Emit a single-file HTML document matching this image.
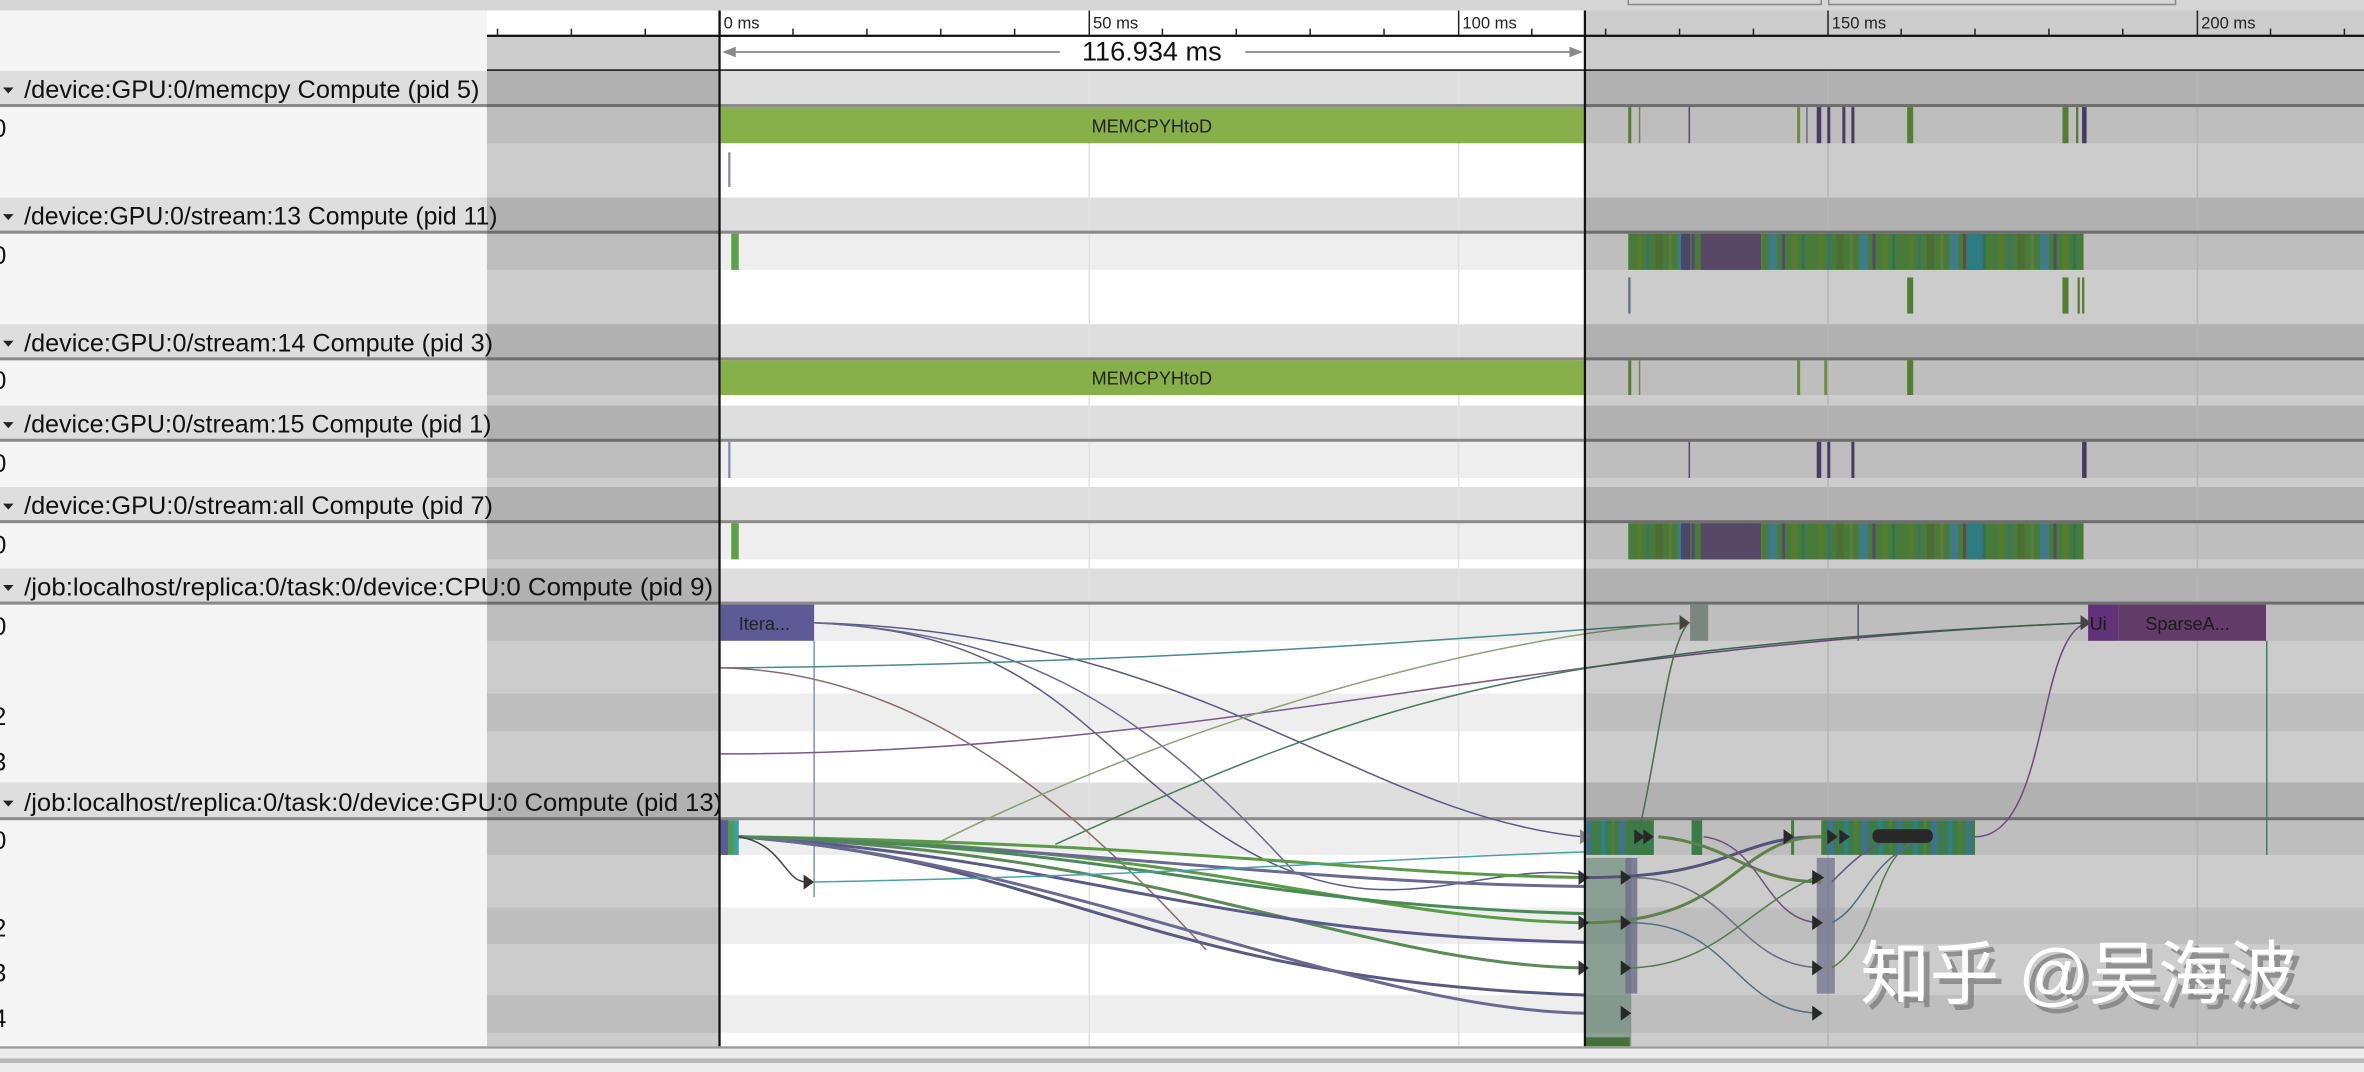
<!DOCTYPE html>
<html><head><meta charset="utf-8"><style>
html,body{margin:0;padding:0;background:#e8e8e8;overflow:hidden}
svg{display:block}
text{font-family:"Liberation Sans","Noto Sans CJK SC",sans-serif}
</style></head><body>
<svg width="2364" height="1072" viewBox="0 0 1568 711" preserveAspectRatio="none" xmlns="http://www.w3.org/2000/svg">
<defs>
<pattern id="dense" x="1080" y="0" width="60" height="10" patternUnits="userSpaceOnUse">
<rect width="60" height="10" fill="#5a9a48"/>
<rect x="6" width="3" height="10" fill="#6c9a3c"/>
<rect x="12" width="2" height="10" fill="#4a8f86"/>
<rect x="18" width="5" height="10" fill="#5f8a3f"/>
<rect x="27" width="2" height="10" fill="#7a9a50"/>
<rect x="33" width="6" height="10" fill="#4f9aa8"/>
<rect x="42" width="2" height="10" fill="#6d5a8a"/>
<rect x="48" width="4" height="10" fill="#6a9c40"/>
<rect x="55" width="2" height="10" fill="#3f8f6a"/>
</pattern>
<pattern id="dense2" x="0" y="0" width="23" height="10" patternUnits="userSpaceOnUse">
<rect width="23" height="10" fill="#4e9a5a"/>
<rect x="4" width="3" height="10" fill="#3aa0a8"/>
<rect x="11" width="2" height="10" fill="#6a9c40"/>
<rect x="16" width="4" height="10" fill="#4f8fb0"/>
</pattern>
</defs>
<rect x="0" y="0" width="1568" height="7" fill="#d6d6d6"/>
<rect x="1080" y="-2" width="128" height="5" fill="none" stroke="#888" stroke-width="1"/>
<rect x="1213" y="-2" width="230" height="5" fill="none" stroke="#888" stroke-width="1"/>
<rect x="0" y="7" width="323" height="687" fill="#f5f5f5"/>
<rect x="323" y="7" width="1245" height="17" fill="#fff"/>
<rect x="323" y="24" width="1245" height="22" fill="#fff"/>
<g fill="#dedede">
<rect x="0" y="47" width="1568" height="23"/>
<rect x="0" y="131" width="1568" height="23"/>
<rect x="0" y="215" width="1568" height="23"/>
<rect x="0" y="269" width="1568" height="23"/>
<rect x="0" y="323" width="1568" height="23"/>
<rect x="0" y="377" width="1568" height="23"/>
<rect x="0" y="519" width="1568" height="24"/>
</g>
<g fill="#eeeeee">
<rect x="323" y="71" width="1245" height="24"/>
<rect x="323" y="155" width="1245" height="24"/>
<rect x="323" y="239" width="1245" height="23"/>
<rect x="323" y="293" width="1245" height="24"/>
<rect x="323" y="347" width="1245" height="24"/>
<rect x="323" y="401" width="1245" height="24"/>
<rect x="323" y="460" width="1245" height="25"/>
<rect x="323" y="544" width="1245" height="23"/>
<rect x="323" y="602" width="1245" height="24"/>
<rect x="323" y="660" width="1245" height="25"/>
</g>
<g fill="#ffffff">
<rect x="323" y="95" width="1245" height="36"/>
<rect x="323" y="179" width="1245" height="36"/>
<rect x="323" y="262" width="1245" height="7"/>
<rect x="323" y="317" width="1245" height="6"/>
<rect x="323" y="371" width="1245" height="6"/>
<rect x="323" y="425" width="1245" height="35"/>
<rect x="323" y="485" width="1245" height="34"/>
<rect x="323" y="567" width="1245" height="35"/>
<rect x="323" y="626" width="1245" height="34"/>
<rect x="323" y="685" width="1245" height="9"/>
</g>
<g stroke="#e2e2e2" stroke-width="1">
<line x1="722.5" y1="46" x2="722.5" y2="694"/>
<line x1="967.5" y1="46" x2="967.5" y2="694"/>
<line x1="1212.5" y1="46" x2="1212.5" y2="694"/>
<line x1="1457.5" y1="46" x2="1457.5" y2="694"/>
</g>
<g fill="#8a8a8a">
<rect x="0" y="69" width="1568" height="2"/>
<rect x="0" y="153" width="1568" height="2"/>
<rect x="0" y="237" width="1568" height="2"/>
<rect x="0" y="291" width="1568" height="2"/>
<rect x="0" y="345" width="1568" height="2"/>
<rect x="0" y="399" width="1568" height="2"/>
<rect x="0" y="542" width="1568" height="2"/>
</g>
<rect x="478" y="71" width="573" height="24" fill="#87b04a"/>
<text x="764" y="88" font-size="12" text-anchor="middle" fill="#222">MEMCPYHtoD</text>
<rect x="483" y="101" width="1.5" height="23" fill="#8888aa"/>
<rect x="478" y="239" width="573" height="23" fill="#87b04a"/>
<text x="764" y="255" font-size="12" text-anchor="middle" fill="#222">MEMCPYHtoD</text>
<rect x="485" y="155" width="5" height="24" fill="#5ea04a"/>
<rect x="483" y="293" width="1.5" height="24" fill="#8888aa"/>
<rect x="485" y="347" width="5" height="24" fill="#5ea04a"/>
<g>
<rect x="1080" y="71" width="2" height="24" fill="#6a9c40"/><rect x="1087" y="71" width="1" height="24" fill="#8ab04a"/>
<rect x="1120" y="71" width="1" height="24" fill="#6d5a8a"/>
<rect x="1192" y="71" width="2" height="24" fill="#8ab04a"/><rect x="1198" y="71" width="1" height="24" fill="#8888aa"/>
<rect x="1205" y="71" width="3" height="24" fill="#5a4a7a"/><rect x="1212" y="71" width="2" height="24" fill="#5a4a7a"/>
<rect x="1222" y="71" width="2" height="24" fill="#5a4a7a"/><rect x="1228" y="71" width="2" height="24" fill="#5a4a7a"/>
<rect x="1265" y="71" width="4" height="24" fill="#6a9c40"/>
<rect x="1368" y="71" width="4" height="24" fill="#6a9c40"/><rect x="1377" y="71" width="1.5" height="24" fill="#6a9c40"/>
<rect x="1381" y="71" width="3" height="24" fill="#5a4a7a"/>
<rect x="1080" y="155" width="302" height="24" fill="url(#dense)"/>
<rect x="1115" y="155" width="6" height="24" fill="#5a5a8a"/>
<rect x="1128" y="155" width="40" height="24" fill="#6d5a80"/>
<rect x="1305" y="155" width="10" height="24" fill="#3a9aa6"/>
<rect x="1080" y="184" width="1.5" height="24" fill="#7a8aa0"/>
<rect x="1265" y="184" width="4" height="24" fill="#6a9c40"/>
<rect x="1368" y="184" width="4" height="24" fill="#6a9c40"/><rect x="1378" y="184" width="1.5" height="24" fill="#6a9c40"/><rect x="1381" y="184" width="1.5" height="24" fill="#6a9c40"/>
<rect x="1080" y="239" width="2" height="23" fill="#6a9c40"/><rect x="1087" y="239" width="1" height="23" fill="#8ab04a"/>
<rect x="1192" y="239" width="2" height="23" fill="#8ab04a"/><rect x="1210" y="239" width="2" height="23" fill="#8ab04a"/>
<rect x="1265" y="239" width="4" height="23" fill="#6a9c40"/>
<rect x="1120" y="293" width="1" height="24" fill="#6d5a8a"/>
<rect x="1205" y="293" width="3" height="24" fill="#5a4a7a"/><rect x="1212" y="293" width="2" height="24" fill="#5a4a7a"/><rect x="1228" y="293" width="2" height="24" fill="#5a4a7a"/>
<rect x="1381" y="293" width="3" height="24" fill="#5a4a7a"/>
<rect x="1080" y="347" width="302" height="24" fill="url(#dense)"/>
<rect x="1115" y="347" width="6" height="24" fill="#5a5a8a"/>
<rect x="1128" y="347" width="40" height="24" fill="#6d5a80"/>
<rect x="1305" y="347" width="10" height="24" fill="#3a9aa6"/>
</g>
<rect x="478" y="401" width="62" height="24" fill="#5d5a96"/>
<text x="490" y="418" font-size="12" fill="#222">Itera...</text>
<rect x="539.5" y="425" width="1" height="170" fill="#7a9aaa"/>
<rect x="1121" y="401" width="12" height="24" fill="#9aa8a0"/>
<rect x="1232" y="401" width="1" height="24" fill="#6d6d9a"/>
<rect x="1385" y="401" width="20" height="24" fill="#7a3f96"/>
<rect x="1405" y="401" width="98" height="24" fill="#7b4a82"/>
<text x="1386" y="418" font-size="12" fill="#222">Ui</text>
<text x="1423" y="418" font-size="12" fill="#222">SparseA...</text>
<rect x="1503" y="425" width="1" height="142" fill="#5a9a80"/>
<rect x="478" y="544" width="12" height="23" fill="url(#dense2)"/>
<rect x="478" y="544" width="5" height="23" fill="#5d5a96"/>
<rect x="1052" y="544" width="45" height="23" fill="url(#dense2)"/>
<rect x="1080" y="544" width="16" height="23" fill="#4a9a5a"/>
<rect x="1122" y="544" width="7" height="23" fill="#4a9a5a"/>
<rect x="1208" y="544" width="102" height="23" fill="url(#dense2)"/>
<rect x="1188" y="544" width="2" height="23" fill="#5a9a50"/>
<rect x="1052" y="569" width="30" height="125" fill="#6a9a80" opacity="0.55"/>
<rect x="1078" y="569" width="8" height="90" fill="#8888aa" opacity="0.8"/>
<rect x="1205" y="569" width="12" height="90" fill="#8888aa" opacity="0.7"/>
<rect x="1052" y="688" width="29" height="6" fill="#5a8a48"/>
<g fill="none" stroke-width="1">
<path d="M540 413 C800 420 900 540 1050 555" stroke="#5a5a80"/>
<path d="M540 413 C700 420 720 500 820 560 S980 570 1050 580" stroke="#5a5a80"/>
<path d="M540 413 C680 420 760 470 860 580" stroke="#6a6a90"/>
<path d="M478 443 C800 440 1000 420 1120 413" stroke="#4a8a8a"/>
<path d="M478 443 C600 445 700 520 800 630" stroke="#8a6a6a"/>
<path d="M478 500 C800 500 1000 430 1385 413" stroke="#7a5a8a"/>
<path d="M700 560 C900 470 1000 430 1385 413" stroke="#4a7a5a"/>
<path d="M620 560 C800 470 1000 420 1120 413" stroke="#8aa078"/>
<path d="M1310 555 C1360 555 1350 420 1385 413" stroke="#8a5a9a"/>
<path d="M1085 560 C1100 500 1105 430 1120 413" stroke="#5a8a5a"/>
<g stroke-width="2">
<path d="M490 555 C800 560 900 580 1052 582" stroke="#5a9a48"/>
<path d="M490 555 C800 560 900 610 1052 612" stroke="#5a9a48"/>
<path d="M490 555 C780 565 900 640 1052 642" stroke="#5a8a58"/>
<path d="M490 555 C760 565 850 585 1052 588" stroke="#6a6a90"/>
<path d="M490 555 C720 570 800 620 1052 625" stroke="#5a5a88"/>
<path d="M490 555 C700 570 760 650 1052 660" stroke="#5a5a80"/>
<path d="M490 555 C700 570 900 670 1052 672" stroke="#6a6a90"/>
<path d="M490 555 C740 560 820 600 1052 606" stroke="#4a8a58"/>
</g>
<path d="M490 555 C520 560 520 585 535 585" stroke="#444"/>
<path d="M540 585 C800 580 900 570 1052 565" stroke="#4aa0a8"/>
<path d="M1052 582 C1150 582 1150 555 1208 555" stroke="#6a6a9a" stroke-width="2"/>
<path d="M1052 612 C1150 612 1150 555 1208 555" stroke="#7aa060" stroke-width="2"/>
<path d="M1082 582 C1150 582 1150 640 1208 642" stroke="#8a8aa0"/>
<path d="M1082 612 C1150 612 1150 672 1208 672" stroke="#6a8aa0"/>
<path d="M1100 555 C1150 560 1160 585 1208 585" stroke="#7aa060" stroke-width="2"/>
<path d="M1130 555 C1170 560 1170 612 1208 612" stroke="#8a6a9a"/>
<path d="M1082 642 C1140 640 1160 600 1208 580" stroke="#6a9a60"/>
<path d="M1215 612 C1240 600 1240 560 1290 555" stroke="#5a8aa0"/>
<path d="M1215 642 C1250 620 1240 560 1280 555" stroke="#6a9a60"/>
<path d="M1215 585 C1230 570 1240 560 1260 555" stroke="#7a6aa0"/>
</g>
<g fill="#333">
<path d="M1048 550 l7 5 l-7 5z" fill="#888"/>
<path d="M1047 577 l7 5 l-7 5z"/><path d="M1047 607 l7 5 l-7 5z"/><path d="M1047 637 l7 5 l-7 5z"/>
<path d="M1075 577 l7 5 l-7 5z"/><path d="M1075 607 l7 5 l-7 5z"/><path d="M1075 637 l7 5 l-7 5z"/><path d="M1075 667 l7 5 l-7 5z"/>
<path d="M1202 577 l8 5 l-8 5z"/><path d="M1202 607 l7 5 l-7 5z"/><path d="M1202 637 l7 5 l-7 5z"/><path d="M1202 667 l7 5 l-7 5z"/>
<path d="M1084 550 l7 5 l-7 5z"/><path d="M1090 550 l7 5 l-7 5z"/><path d="M1183 550 l7 5 l-7 5z"/>
<path d="M1212 550 l7 5 l-7 5z"/><path d="M1220 550 l7 5 l-7 5z"/>
<rect x="1242" y="550" width="40" height="9" rx="4"/>
<path d="M533 580 l7 5 l-7 5z"/>
<path d="M1114 408 l7 5 l-7 5z" fill="#555"/>
<path d="M1380 408 l7 5 l-7 5z" fill="#555"/>
</g>
<rect x="323" y="24" width="154" height="670" fill="#000" opacity="0.2"/>
<rect x="1052" y="7" width="516" height="687" fill="#000" opacity="0.2"/>
<rect x="323" y="23" width="1245" height="1.5" fill="#111"/>
<rect x="323" y="46" width="1245" height="1" fill="#111"/>
<g stroke="#222" stroke-width="1">
<line x1="477.5" y1="7" x2="477.5" y2="24"/><line x1="722.5" y1="7" x2="722.5" y2="24"/><line x1="967.5" y1="7" x2="967.5" y2="24"/><line x1="1212.5" y1="7" x2="1212.5" y2="24"/><line x1="1457.5" y1="7" x2="1457.5" y2="24"/>
<g>
<line x1="330" y1="19" x2="330" y2="24"/><line x1="379" y1="19" x2="379" y2="24"/><line x1="428" y1="19" x2="428" y2="24"/>
<line x1="526" y1="19" x2="526" y2="24"/><line x1="575" y1="19" x2="575" y2="24"/><line x1="624" y1="19" x2="624" y2="24"/><line x1="673" y1="19" x2="673" y2="24"/>
<line x1="771" y1="19" x2="771" y2="24"/><line x1="820" y1="19" x2="820" y2="24"/><line x1="869" y1="19" x2="869" y2="24"/><line x1="918" y1="19" x2="918" y2="24"/>
<line x1="1016" y1="19" x2="1016" y2="24"/><line x1="1065" y1="19" x2="1065" y2="24"/><line x1="1114" y1="19" x2="1114" y2="24"/><line x1="1163" y1="19" x2="1163" y2="24"/>
<line x1="1261" y1="19" x2="1261" y2="24"/><line x1="1310" y1="19" x2="1310" y2="24"/><line x1="1359" y1="19" x2="1359" y2="24"/><line x1="1408" y1="19" x2="1408" y2="24"/>
<line x1="1506" y1="19" x2="1506" y2="24"/><line x1="1555" y1="19" x2="1555" y2="24"/>
</g>
</g>
<g font-size="11" fill="#222">
<text x="480" y="19">0 ms</text><text x="725" y="19">50 ms</text><text x="970" y="19">100 ms</text><text x="1215" y="19">150 ms</text><text x="1460" y="19">200 ms</text>
</g>
<line x1="485" y1="34.5" x2="703" y2="34.5" stroke="#888" stroke-width="1.2"/>
<line x1="826" y1="34.5" x2="1045" y2="34.5" stroke="#888" stroke-width="1.2"/>
<path d="M479 34.5 l9 -3.5 v7z" fill="#888"/><path d="M1050 34.5 l-9 -3.5 v7z" fill="#888"/>
<text x="764" y="40" font-size="18" text-anchor="middle" fill="#111">116.934 ms</text>
<rect x="476.5" y="7" width="1.5" height="687" fill="#111"/>
<rect x="1050.5" y="7" width="1.5" height="687" fill="#111"/>
<g font-size="16.5" fill="#111" lengthAdjust="spacingAndGlyphs">
<text x="16" y="65" textLength="302" lengthAdjust="spacingAndGlyphs">/device:GPU:0/memcpy Compute (pid 5)</text>
<text x="16" y="149" textLength="314" lengthAdjust="spacingAndGlyphs">/device:GPU:0/stream:13 Compute (pid 11)</text>
<text x="16" y="233" textLength="311" lengthAdjust="spacingAndGlyphs">/device:GPU:0/stream:14 Compute (pid 3)</text>
<text x="16" y="287" textLength="310" lengthAdjust="spacingAndGlyphs">/device:GPU:0/stream:15 Compute (pid 1)</text>
<text x="16" y="341" textLength="311" lengthAdjust="spacingAndGlyphs">/device:GPU:0/stream:all Compute (pid 7)</text>
<text x="16" y="395" textLength="457" lengthAdjust="spacingAndGlyphs">/job:localhost/replica:0/task:0/device:CPU:0 Compute (pid 9)</text>
<text x="16" y="538" textLength="463" lengthAdjust="spacingAndGlyphs">/job:localhost/replica:0/task:0/device:GPU:0 Compute (pid 13)</text>
<text x="-5" y="91">0</text><text x="-5" y="175">0</text><text x="-5" y="258">0</text><text x="-5" y="313">0</text><text x="-5" y="367">0</text>
<text x="-5" y="421">0</text><text x="-5" y="481">2</text><text x="-5" y="511">3</text>
<text x="-5" y="563">0</text><text x="-5" y="621">2</text><text x="-5" y="651">3</text><text x="-5" y="681">4</text>
</g>
<g fill="#222">
<path d="M2 58 h7 l-3.5 4z"/><path d="M2 142 h7 l-3.5 4z"/><path d="M2 226 h7 l-3.5 4z"/><path d="M2 280 h7 l-3.5 4z"/><path d="M2 334 h7 l-3.5 4z"/><path d="M2 388 h7 l-3.5 4z"/><path d="M2 531 h7 l-3.5 4z"/>
</g>
<rect x="0" y="694" width="1568" height="17" fill="#ececec"/>
<rect x="0" y="694" width="1568" height="1.5" fill="#999"/>
<rect x="0" y="702" width="1568" height="3" fill="#b8b8b8"/>
<g font-size="46" font-family="'Noto Sans CJK SC','WenQuanYi Zen Hei',sans-serif">
<text x="1238" y="666" fill="#777" opacity="0.7">知乎 @吴海波</text>
<text x="1234" y="662" fill="#fff">知乎 @吴海波</text>
</g>
</svg>
</body></html>
